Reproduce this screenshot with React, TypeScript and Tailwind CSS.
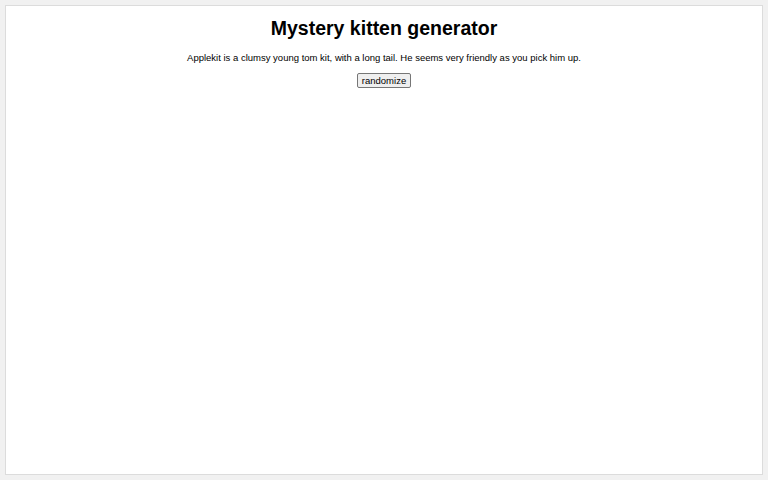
export default function App() {
  return (
    <div
      className="w-[768px] h-[480px] bg-[#f1f1f1] p-[5px]"
      style={{ fontFamily: '"Liberation Sans", Arial, sans-serif' }}
    >
      <div className="h-full bg-white border border-[#dcdcdc] flex flex-col items-center pt-[10px]">
        <h1 className="text-[19.5px] leading-[24px] font-bold text-black">Mystery kitten generator</h1>
        <p className="mt-[12px] text-[9.5px] leading-[12px] text-black">
          Applekit is a clumsy young tom kit, with a long tail. He seems very friendly as you pick him up.
        </p>
        <button className="mt-[9px] h-[15px] px-[4px] text-[9.5px] leading-[12px] text-black bg-[#efefef] border border-[#767676] rounded-[2px]">
          randomize
        </button>
      </div>
    </div>
  );
}
